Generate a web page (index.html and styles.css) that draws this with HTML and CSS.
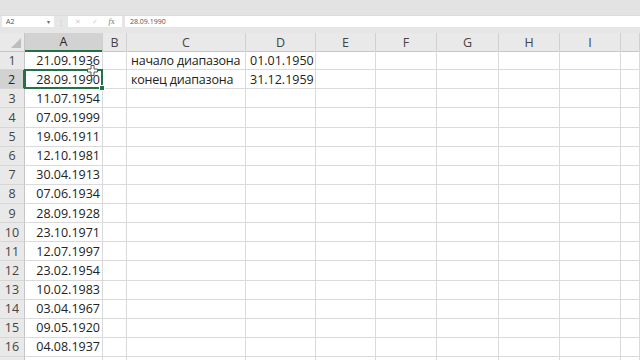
FILE: index.html
```html
<!DOCTYPE html>
<html>
<head>
    <title>Книга1 - Excel</title>
    <link rel="stylesheet" href="styles.css">
</head>
<body>
    <div class="ribbon-edge"></div>

    <!-- formula bar -->
    <div class="formula-bar">
        <div class="name-box"><span>A2</span><span class="caret">&#9662;</span></div>
        <div class="grip">&#8942;</div>
        <div class="fx-box">
            <span class="fx-btn">&#10005;</span>
            <span class="fx-btn">&#10003;</span>
            <span class="fx-btn fx"><i>f</i>x</span>
        </div>
        <div class="formula-input">28.09.1990</div>
    </div>

    <div class="sheet">
        <div class="row head">
            <div class="corner"><span class="tri"></span></div>
            <div class="col-h sel-h">A</div>
            <div class="col-h">B</div>
            <div class="col-h">C</div>
            <div class="col-h">D</div>
            <div class="col-h">E</div>
            <div class="col-h">F</div>
            <div class="col-h">G</div>
            <div class="col-h">H</div>
            <div class="col-h">I</div>
            <div class="col-h"></div>
        </div>
        <div class="row"><div class="row-h">1</div><div class="c num">21.09.1936</div><div class="c"></div><div class="c txt">начало диапазона</div><div class="c">01.01.1950</div><div class="c"></div><div class="c"></div><div class="c"></div><div class="c"></div><div class="c"></div><div class="c"></div></div>
        <div class="row"><div class="row-h sel-r">2</div><div class="c num active">28.09.1990<svg class="cursor" width="11" height="11" viewBox="0 0 11 11"><path d="M4 0.5h3v3.5h3.5v3h-3.5v3.5h-3v-3.5h-3.5v-3h3.5z" fill="#fff" stroke="#555" stroke-width="1"/></svg></div><div class="c"></div><div class="c txt">конец диапазона</div><div class="c">31.12.1959</div><div class="c"></div><div class="c"></div><div class="c"></div><div class="c"></div><div class="c"></div><div class="c"></div></div>
        <div class="row"><div class="row-h">3</div><div class="c num">11.07.1954</div><div class="c"></div><div class="c"></div><div class="c"></div><div class="c"></div><div class="c"></div><div class="c"></div><div class="c"></div><div class="c"></div><div class="c"></div></div>
        <div class="row"><div class="row-h">4</div><div class="c num">07.09.1999</div><div class="c"></div><div class="c"></div><div class="c"></div><div class="c"></div><div class="c"></div><div class="c"></div><div class="c"></div><div class="c"></div><div class="c"></div></div>
        <div class="row"><div class="row-h">5</div><div class="c num">19.06.1911</div><div class="c"></div><div class="c"></div><div class="c"></div><div class="c"></div><div class="c"></div><div class="c"></div><div class="c"></div><div class="c"></div><div class="c"></div></div>
        <div class="row"><div class="row-h">6</div><div class="c num">12.10.1981</div><div class="c"></div><div class="c"></div><div class="c"></div><div class="c"></div><div class="c"></div><div class="c"></div><div class="c"></div><div class="c"></div><div class="c"></div></div>
        <div class="row"><div class="row-h">7</div><div class="c num">30.04.1913</div><div class="c"></div><div class="c"></div><div class="c"></div><div class="c"></div><div class="c"></div><div class="c"></div><div class="c"></div><div class="c"></div><div class="c"></div></div>
        <div class="row"><div class="row-h">8</div><div class="c num">07.06.1934</div><div class="c"></div><div class="c"></div><div class="c"></div><div class="c"></div><div class="c"></div><div class="c"></div><div class="c"></div><div class="c"></div><div class="c"></div></div>
        <div class="row"><div class="row-h">9</div><div class="c num">28.09.1928</div><div class="c"></div><div class="c"></div><div class="c"></div><div class="c"></div><div class="c"></div><div class="c"></div><div class="c"></div><div class="c"></div><div class="c"></div></div>
        <div class="row"><div class="row-h">10</div><div class="c num">23.10.1971</div><div class="c"></div><div class="c"></div><div class="c"></div><div class="c"></div><div class="c"></div><div class="c"></div><div class="c"></div><div class="c"></div><div class="c"></div></div>
        <div class="row"><div class="row-h">11</div><div class="c num">12.07.1997</div><div class="c"></div><div class="c"></div><div class="c"></div><div class="c"></div><div class="c"></div><div class="c"></div><div class="c"></div><div class="c"></div><div class="c"></div></div>
        <div class="row"><div class="row-h">12</div><div class="c num">23.02.1954</div><div class="c"></div><div class="c"></div><div class="c"></div><div class="c"></div><div class="c"></div><div class="c"></div><div class="c"></div><div class="c"></div><div class="c"></div></div>
        <div class="row"><div class="row-h">13</div><div class="c num">10.02.1983</div><div class="c"></div><div class="c"></div><div class="c"></div><div class="c"></div><div class="c"></div><div class="c"></div><div class="c"></div><div class="c"></div><div class="c"></div></div>
        <div class="row"><div class="row-h">14</div><div class="c num">03.04.1967</div><div class="c"></div><div class="c"></div><div class="c"></div><div class="c"></div><div class="c"></div><div class="c"></div><div class="c"></div><div class="c"></div><div class="c"></div></div>
        <div class="row"><div class="row-h">15</div><div class="c num">09.05.1920</div><div class="c"></div><div class="c"></div><div class="c"></div><div class="c"></div><div class="c"></div><div class="c"></div><div class="c"></div><div class="c"></div><div class="c"></div></div>
        <div class="row"><div class="row-h">16</div><div class="c num">04.08.1937</div><div class="c"></div><div class="c"></div><div class="c"></div><div class="c"></div><div class="c"></div><div class="c"></div><div class="c"></div><div class="c"></div><div class="c"></div></div>
        <div class="row"><div class="row-h"></div><div class="c"></div><div class="c"></div><div class="c"></div><div class="c"></div><div class="c"></div><div class="c"></div><div class="c"></div><div class="c"></div><div class="c"></div><div class="c"></div></div>
    </div>
</body>
</html>
```

FILE: styles.css
```css
:root {
    --xl-green: #217346;
    --grid: #dadada;
    --head-bg: #e9e9e9;
    --head-sel: #d2d2d2;
}

body {
    margin: 0;
    width: 640px;
    height: 360px;
    overflow: hidden;
    background: #e6e6e6;
    font-family: "Open Sans", "Liberation Sans", sans-serif;
    color: #222;
}

.ribbon-edge { height: 15px; background: #e3e3e3; border-bottom: 1px solid #dcdcdc; }

/* formula bar */
.formula-bar { display: flex; align-items: stretch; height: 11px; margin-bottom: 6px; font-size: 7px; color: #555; }
.name-box { width: 52px; margin-left: 2px; background: #fff; display: flex; justify-content: space-between; align-items: center; padding: 0 4px; box-sizing: border-box; }
.name-box .caret { font-size: 6px; color: #666; }
.grip { width: 14px; text-align: center; color: #c4c4c4; font-size: 8px; line-height: 11px; }
.fx-box { width: 54px; background: #fff; display: flex; justify-content: space-around; align-items: center; padding: 0 2px; box-sizing: border-box; }
.fx-btn { color: #cfcfcf; font-size: 7px; }
.fx-btn.fx { color: #777; font-family: "Liberation Serif", serif; font-size: 8px; }
.formula-input { flex: 1; margin-left: 3px; background: #fff; padding-left: 5px; line-height: 11px; }

/* sheet grid */
.sheet { background: #fff; }
.row {
    display: grid;
    grid-template-columns: 25px 78px 24px 119px 70px 60px 61px 62px 61px 61px 19px;
    height: 19.13px;
}
.row.head { height: 18px; background: var(--head-bg); }

.corner { position: relative; border-right: 1px solid #c6c6c6; border-bottom: 1px solid #c6c6c6; background: var(--head-bg); }
.corner .tri { position: absolute; right: 3px; bottom: 3px; width: 0; height: 0; border-left: 10px solid transparent; border-bottom: 10px solid #bdbdbd; }

.col-h {
    display: flex; align-items: center; justify-content: center;
    font-size: 12.5px; color: #444;
    border-right: 1px solid #d0d0d0;
    border-bottom: 1px solid #c6c6c6;
    box-sizing: border-box;
}
.col-h.sel-h { background: var(--head-sel); border-bottom: 2px solid var(--xl-green); color: #262626; }

.row-h {
    display: flex; align-items: center; justify-content: center;
    font-size: 12.5px; color: #444;
    background: var(--head-bg);
    border-right: 1px solid #c6c6c6;
    border-bottom: 1px solid #d6d6d6;
    box-sizing: border-box;
}
.row-h.sel-r { background: var(--head-sel); border-right: 2px solid var(--xl-green); color: #262626; }

.c {
    display: flex; align-items: center;
    padding: 0 2px 0 4px;
    font-size: 12.5px;
    white-space: nowrap;
    border-right: 1px solid var(--grid);
    border-bottom: 1px solid var(--grid);
    box-sizing: border-box;
}
.c.num { justify-content: flex-end; }
.c.txt { letter-spacing: -0.2px; }

.c.active { position: relative; }
.c.active::before {
    content: "";
    position: absolute;
    left: -1px; top: -1px; right: -1px; bottom: -1px;
    border: 2px solid var(--xl-green);
}
.c.active::after {
    content: "";
    position: absolute;
    right: -3px; bottom: -3px;
    width: 4px; height: 4px;
    background: var(--xl-green);
    border: 1px solid #fff;
}
.cursor { position: absolute; left: 62px; top: -5px; }
```
